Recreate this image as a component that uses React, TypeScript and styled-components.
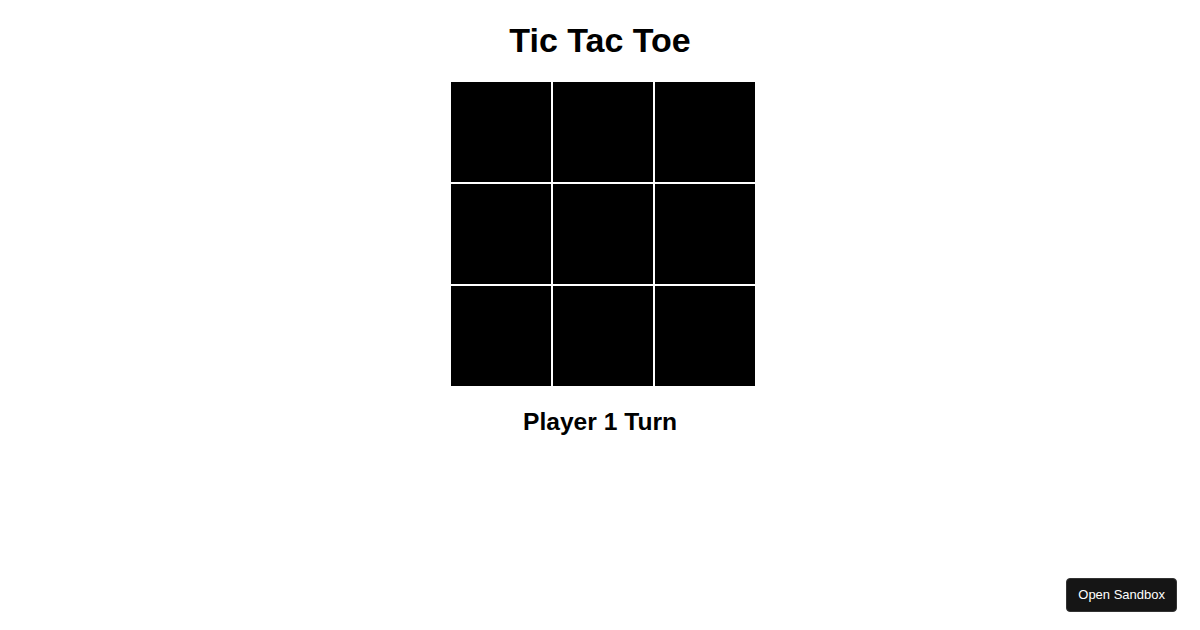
import styled, { createGlobalStyle } from "styled-components";

const GlobalStyle = createGlobalStyle`
    body {
        margin: 0;
        background: #fff;
        font-family: "Liberation Sans", Arial, sans-serif;
    }
`;

const Page = styled.div`
    display: flex;
    flex-direction: column;
    align-items: center;
    padding-top: 20px;
`;

const Title = styled.h1`
    font-size: 34px;
    font-weight: bold;
    margin: 0 0 22px;
    line-height: 40px;
`;

const Board = styled.div`
    display: grid;
    grid-template-columns: repeat(3, 100px);
    grid-template-rows: repeat(3, 100px);
    gap: 2px;
    margin-left: 6px;
`;

const Cell = styled.button`
    background: #000;
    border: 0;
    padding: 0;
    cursor: pointer;
`;

const Status = styled.h2`
    font-size: 24.6px;
    font-weight: bold;
    margin: 22px 0 0;
    line-height: 28px;
`;

const SandboxButton = styled.a`
    position: fixed;
    right: 23px;
    bottom: 18px;
    background: #151515;
    color: #fff;
    font-size: 13px;
    line-height: 15px;
    padding: 8px 11px 9px;
    border-radius: 4px;
    border: 1px solid #333;
    text-decoration: none;
`;

export default function App() {
    const cells = Array.from({ length: 9 });
    return (
        <>
            <GlobalStyle />
            <Page>
                <Title>Tic Tac Toe</Title>
                <Board>
                    {cells.map((_, i) => (
                        <Cell key={i} />
                    ))}
                </Board>
                <Status>Player 1 Turn</Status>
            </Page>
            <SandboxButton href="#">Open Sandbox</SandboxButton>
        </>
    );
}
